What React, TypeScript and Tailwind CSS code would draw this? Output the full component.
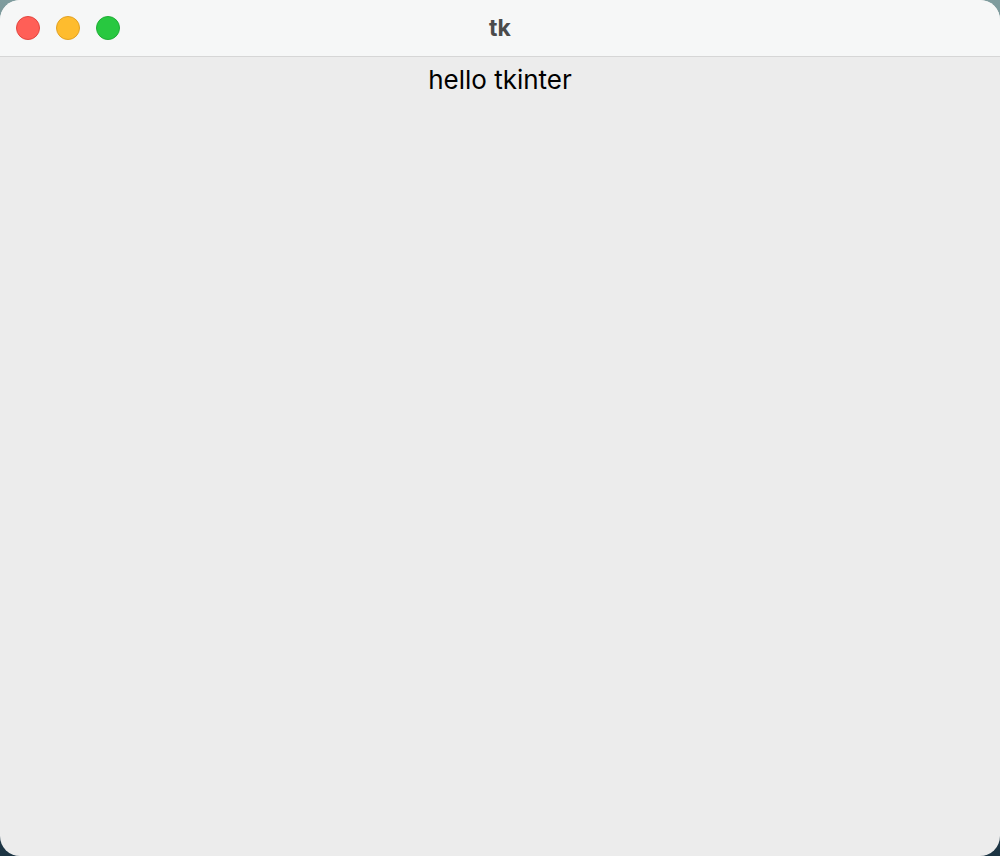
export default function App() {
  return (
    <div className="h-[856px] w-[1000px] bg-gradient-to-b from-[#7f9c9e] via-[#3c5c68] to-[#1c3443] font-['Inter',sans-serif]">
      <div className="flex h-full flex-col overflow-hidden rounded-[20px] bg-[#ececec]">
        {/* Title bar */}
        <div className="relative flex h-[57px] shrink-0 items-center border-b border-[#d6d6d6] bg-[#f6f7f7]">
          <div className="flex items-center gap-4 pl-4">
            <span className="h-6 w-6 rounded-full border border-[#e2463f] bg-[#ff5f57]" />
            <span className="h-6 w-6 rounded-full border border-[#e1a123] bg-[#febc2e]" />
            <span className="h-6 w-6 rounded-full border border-[#1fad35] bg-[#28c840]" />
          </div>
          <div className="absolute inset-x-0 top-0 flex h-[56px] items-center justify-center text-[23px] font-bold text-[#4b4b4b]">
            tk
          </div>
        </div>
        {/* Body */}
        <div className="flex flex-1 flex-col items-center">
          <div className="pt-[7px] text-[26px] leading-[32px] text-black">hello tkinter</div>
        </div>
      </div>
    </div>
  );
}
